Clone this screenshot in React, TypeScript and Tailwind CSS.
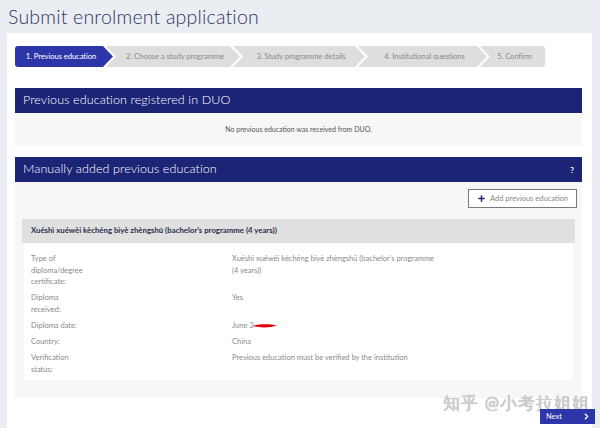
import { Plus, ChevronRight } from "lucide-react";

const steps = [
  { label: "1. Previous education", w: "w-[98px]", active: true },
  { label: "2. Choose a study programme", w: "w-[134px]" },
  { label: "3. Study programme details", w: "w-[132px]" },
  { label: "4. Institutional questions", w: "w-[129px]" },
  { label: "5. Confirm", w: "w-[65px]", last: true },
];

const details = [
  {
    label: "Type of diploma/degree certificate:",
    value: "Xuéshì xuéwèi kèchéng bìyè zhèngshū (bachelor's programme (4 years))",
  },
  { label: "Diploma received:", value: "Yes" },
  { label: "Diploma date:", value: "date" },
  { label: "Country:", value: "China" },
  { label: "Verification status:", value: "Previous education must be verified by the institution" },
];

function Stepper() {
  return (
    <div className="flex h-[21px]">
      {steps.map((s, i) => {
        const shape =
          i === 0
            ? "rounded-l-[3px] [clip-path:polygon(0_0,calc(100%-10px)_0,100%_50%,calc(100%-10px)_100%,0_100%)]"
            : s.last
              ? "rounded-r-[3px] -ml-[7px] [clip-path:polygon(0_0,100%_0,100%_100%,0_100%,10px_50%)]"
              : "-ml-[7px] [clip-path:polygon(0_0,calc(100%-10px)_0,100%_50%,calc(100%-10px)_100%,0_100%,10px_50%)]";
        return (
          <div
            key={s.label}
            className={`${s.w} ${shape} flex items-center justify-center text-[7.7px] tracking-[-0.1px] ${
              s.active ? "bg-[#2c36a9] text-white pr-[6px]" : "bg-[#dedede] text-[#8a8a8a] pl-[4px]"
            }`}
          >
            {s.label}
          </div>
        );
      })}
    </div>
  );
}

function PanelHeader({ title, help }: { title: string; help?: boolean }) {
  return (
    <div className="h-[25px] bg-[#1c2476] flex items-center justify-between pl-[8px] pr-[8px]">
      <span className="text-white text-[12.5px] font-light tracking-[0.1px]">{title}</span>
      {help && <span className="text-white text-[8px] font-bold">?</span>}
    </div>
  );
}

export default function App() {
  return (
    <div
      className="w-[600px] h-[428px] bg-[#eaeef2] overflow-hidden relative"
      style={{ fontFamily: "Lato, 'Open Sans', sans-serif" }}
    >
      <h1 className="h-[33px] pl-[8px] pt-[5px] text-[19.5px] leading-[24px] font-light text-[#2e3562] tracking-[0.2px]">
        Submit enrolment application
      </h1>
      <div className="ml-[7px] w-[585px] h-[395px] bg-white pl-[8px] pr-[10px] pt-[13px]">
        <Stepper />

        <div className="mt-[21px]">
          <PanelHeader title="Previous education registered in DUO" />
          <div className="h-[33px] bg-[#f7f7f7] flex items-center justify-center text-[7px] text-[#555]">
            No previous education was received from DUO.
          </div>
        </div>

        <div className="mt-[11px]">
          <PanelHeader title="Manually added previous education" help />
          <div className="bg-[#f7f7f7] h-[216px] pt-[7px]">
            <div className="flex justify-end pr-[5px]">
              <button className="h-[19px] w-[109px] bg-white border border-[#7a7a7a] flex items-center justify-center gap-[4px] text-[7.5px] text-[#888]">
                <Plus size={9} strokeWidth={4} className="text-[#1c2476]" />
                Add previous education
              </button>
            </div>
            <div className="mx-[7px] mt-[11px] h-[24px] bg-[#e0e0e0] flex items-center pl-[9px] text-[7.8px] font-bold text-[#2a2d4d]">
              Xuéshì xuéwèi kèchéng bìyè zhèngshū (bachelor's programme (4 years))
            </div>
            <div className="mx-[9px] h-[137px] bg-white pt-[10px] pl-[7px] flex flex-col gap-[4.5px]">
              {details.map((d) => (
                <div key={d.label} className="flex text-[7.5px] leading-[11.6px] text-[#8a8a8a]">
                  <div className="w-[201px] shrink-0">
                    <div className="w-[55px]">{d.label}</div>
                  </div>
                  <div className="w-[210px]">
                    {d.value === "date" ? (
                      <span className="inline-flex items-center">
                        June 3
                        <svg width="26" height="6" viewBox="0 0 26 6" className="-ml-[2px]">
                          <path d="M1 3 C6 0.8, 18 0.8, 25 2.6 C18 5, 7 5, 1 3Z" fill="#e00000" />
                        </svg>
                      </span>
                    ) : (
                      d.value
                    )}
                  </div>
                </div>
              ))}
            </div>
          </div>
        </div>

        <div className="flex justify-end -mr-[13px] mt-[11px]">
          <div className="relative">
            <span className="absolute right-[5px] -top-[16px] whitespace-nowrap text-[17px] leading-[20px] text-[#cfcfcf] tracking-[1px] [text-shadow:0_0_1px_#999]">
              知乎 @小考拉姐姐
            </span>
            <button className="relative w-[55px] h-[15px] bg-[#2c36a9] flex items-center justify-between pl-[6px] pr-[4px] text-white text-[7.5px]">
              Next
              <ChevronRight size={9} strokeWidth={4} />
            </button>
          </div>
        </div>
      </div>
    </div>
  );
}
